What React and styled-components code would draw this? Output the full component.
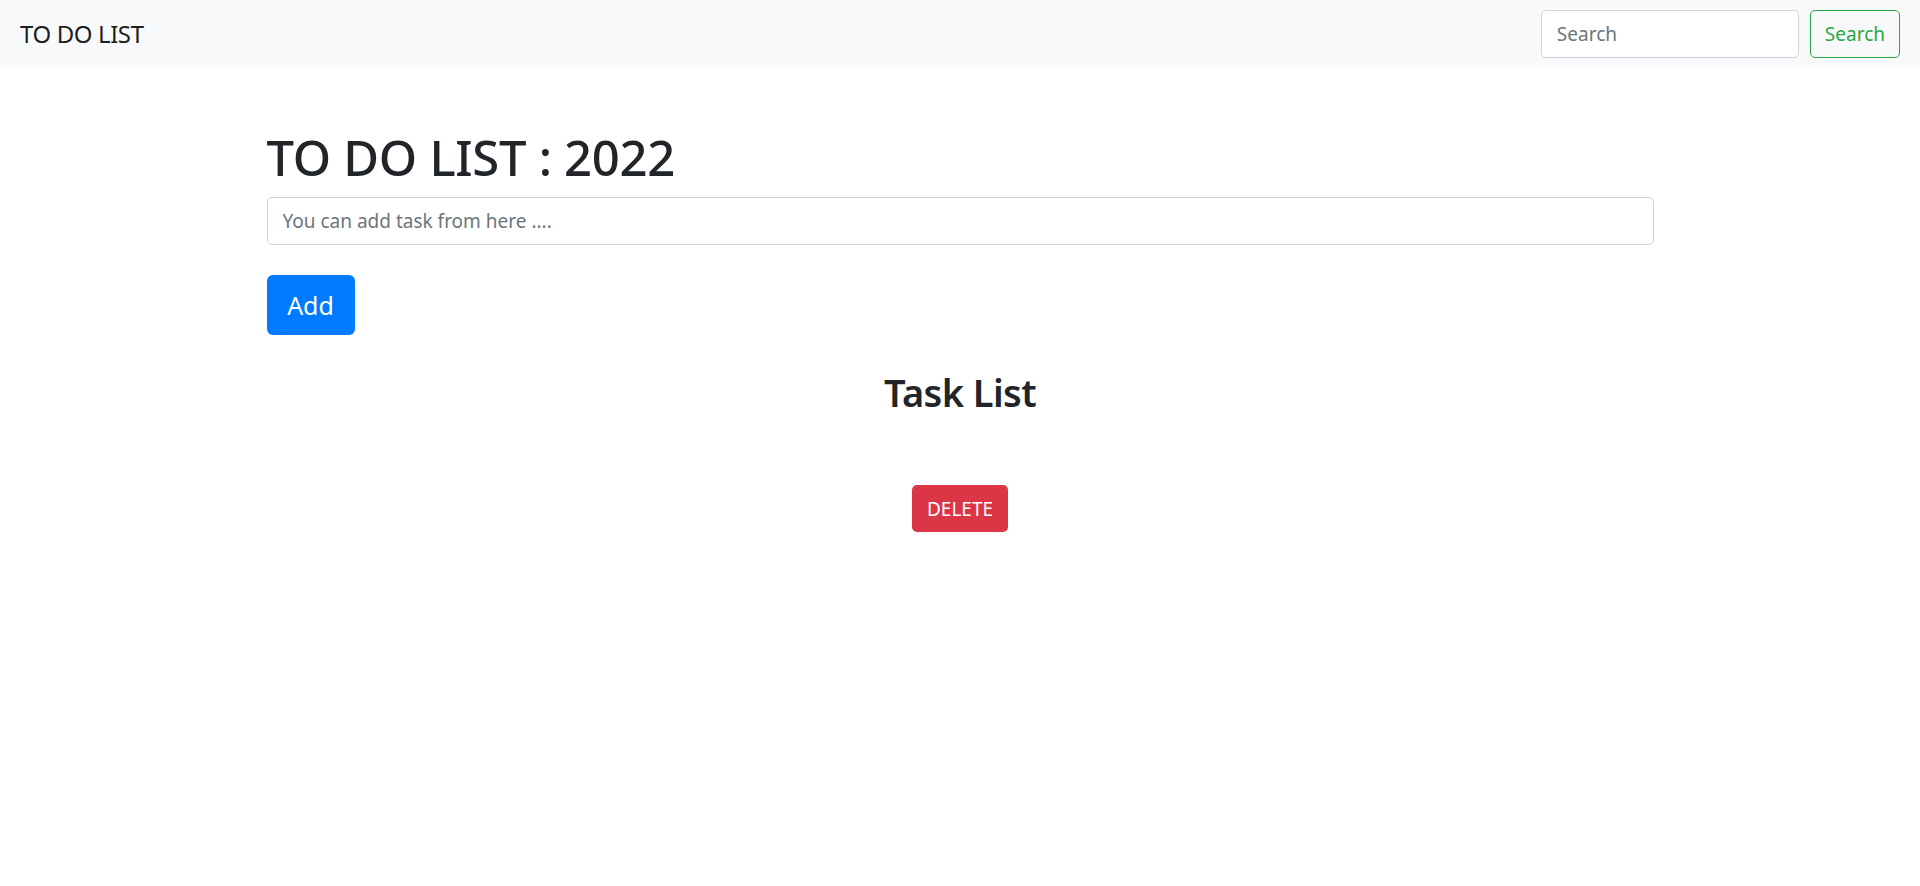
import React, { useState } from "react";
import styled, { createGlobalStyle } from "styled-components";

const GlobalStyle = createGlobalStyle`
  * { box-sizing: border-box; }
  body {
    margin: 0;
    background: #ffffff;
    color: #212529;
    font-family: "Noto Sans", "Open Sans", sans-serif;
    font-size: 20px;
  }
`;

const App = () => {
  const [task, setTask] = useState("");

  return (
    <>
      <GlobalStyle />
      <Navbar>
        <Brand>TO DO LIST</Brand>
        <SearchForm onSubmit={(e) => e.preventDefault()}>
          <SearchInput placeholder="Search" />
          <OutlineButton type="submit">Search</OutlineButton>
        </SearchForm>
      </Navbar>

      <Container>
        <Title>TO DO LIST : 2022</Title>
        <TaskInput
          placeholder="You can add task from here ...."
          value={task}
          onChange={(e) => setTask(e.target.value)}
        />
        <AddButton>Add</AddButton>

        <ListTitle>Task List</ListTitle>
        <TaskArea>
          <DeleteButton>DELETE</DeleteButton>
        </TaskArea>
      </Container>
    </>
  );
};

export default App;

/* ================= STYLES ================= */

const Navbar = styled.nav`
  display: flex;
  align-items: center;
  justify-content: space-between;
  height: 67px;
  padding: 0 20px;
  background: #f8f9fa;
`;

const Brand = styled.a`
  font-size: 24px;
  letter-spacing: -0.4px;
  color: rgba(0, 0, 0, 0.9);
  text-decoration: none;
`;

const SearchForm = styled.form`
  display: flex;
  align-items: center;
  gap: 11px;
`;

const SearchInput = styled.input`
  width: 258px;
  height: 48px;
  padding: 0 15px;
  font-family: inherit;
  font-size: 19px;
  color: #495057;
  border: 1px solid #ced4da;
  border-radius: 5px;
  outline: none;

  &::placeholder {
    color: #6c757d;
  }
`;

const OutlineButton = styled.button`
  height: 48px;
  padding: 0 14px;
  font-family: inherit;
  font-size: 19px;
  color: #28a745;
  background: transparent;
  border: 1px solid #28a745;
  border-radius: 5px;
  cursor: pointer;
`;

const Container = styled.main`
  width: 1425px;
  margin: 0 auto;
  padding: 0 19px;
`;

const Title = styled.h1`
  margin: 61px 0 10px;
  font-size: 49px;
  font-weight: 500;
  letter-spacing: -0.3px;
  line-height: 1.2;
`;

const TaskInput = styled.input`
  display: block;
  width: 100%;
  height: 48px;
  padding: 0 15px;
  font-family: inherit;
  font-size: 19px;
  color: #495057;
  border: 1px solid #ced4da;
  border-radius: 5px;
  outline: none;

  &::placeholder {
    color: #6c757d;
  }
`;

const AddButton = styled.button`
  display: block;
  margin-top: 30px;
  height: 60px;
  width: 88px;
  font-family: inherit;
  font-size: 25px;
  color: #ffffff;
  background: #007bff;
  border: none;
  border-radius: 6px;
  cursor: pointer;
`;

const ListTitle = styled.h2`
  margin: 35px 0 0;
  text-align: center;
  font-size: 38px;
  font-weight: 600;
  letter-spacing: -0.6px;
  line-height: 1.2;
`;

const TaskArea = styled.div`
  display: flex;
  justify-content: center;
  padding-top: 70px;
`;

const DeleteButton = styled.button`
  height: 47px;
  padding: 0 15px;
  font-family: inherit;
  font-size: 19px;
  color: #ffffff;
  background: #dc3545;
  border: none;
  border-radius: 5px;
  cursor: pointer;
`;
